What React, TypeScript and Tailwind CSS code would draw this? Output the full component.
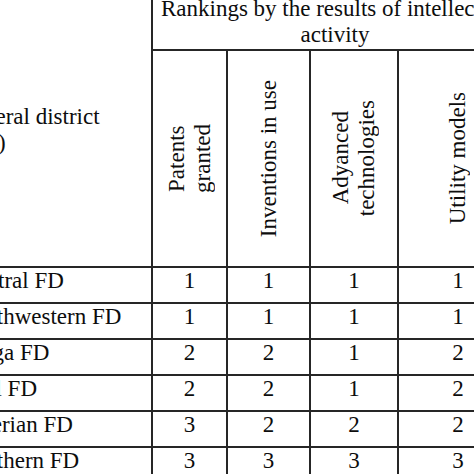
const rows: [string, number[]][] = [
  ['Central FD', [1, 1, 1, 1]],
  ['Northwestern FD', [1, 1, 1, 1]],
  ['Volga FD', [2, 2, 1, 2]],
  ['Ural FD', [2, 2, 1, 2]],
  ['Siberian FD', [3, 2, 2, 2]],
  ['Southern FD', [3, 3, 3, 3]],
];

const cell = 'border-r-2 border-b-2 border-[#262626] flex items-center';

function Vertical({ children }: { children: React.ReactNode }) {
  return <div className="[writing-mode:vertical-rl] rotate-180 text-center whitespace-nowrap">{children}</div>;
}

export default function App() {
  return (
    <div className="w-[474px] h-[474px] overflow-hidden bg-white text-[#0d0d0d] font-['Liberation_Serif',serif] text-[23px] leading-[26px]">
      <div className="ml-[-46px] mt-[-7px] w-max grid grid-cols-[197px_75px_83px_88px_120px] grid-rows-[56px_217px_repeat(6,36px)] border-t-2 border-l-2 border-[#262626]">
        <div className={`${cell} row-span-2 pl-[5px] pb-[2px]`}>
          <div>
            Federal district
            <br />
            (FD)
          </div>
        </div>
        <div className={`${cell} col-span-4 justify-center text-center`}>
          <div>
            Rankings by the results of intellectual
            <br />
            activity
          </div>
        </div>

        <div className={`${cell} justify-center`}>
          <Vertical>
            Patents
            <br />
            granted
          </Vertical>
        </div>
        <div className={`${cell} justify-center`}>
          <Vertical>Inventions in use</Vertical>
        </div>
        <div className={`${cell} justify-center`}>
          <Vertical>
            Adyanced
            <br />
            technologies
          </Vertical>
        </div>
        <div className={`${cell} justify-center`}>
          <Vertical>Utility models</Vertical>
        </div>

        {rows.map(([name, vals]) => (
          <>
            <div key={name} className={`${cell} pl-[5px] pb-2 whitespace-nowrap`}>
              {name}
            </div>
            {vals.map((v, i) => (
              <div key={name + i} className={`${cell} justify-center pb-2`}>
                {v}
              </div>
            ))}
          </>
        ))}
      </div>
    </div>
  );
}
